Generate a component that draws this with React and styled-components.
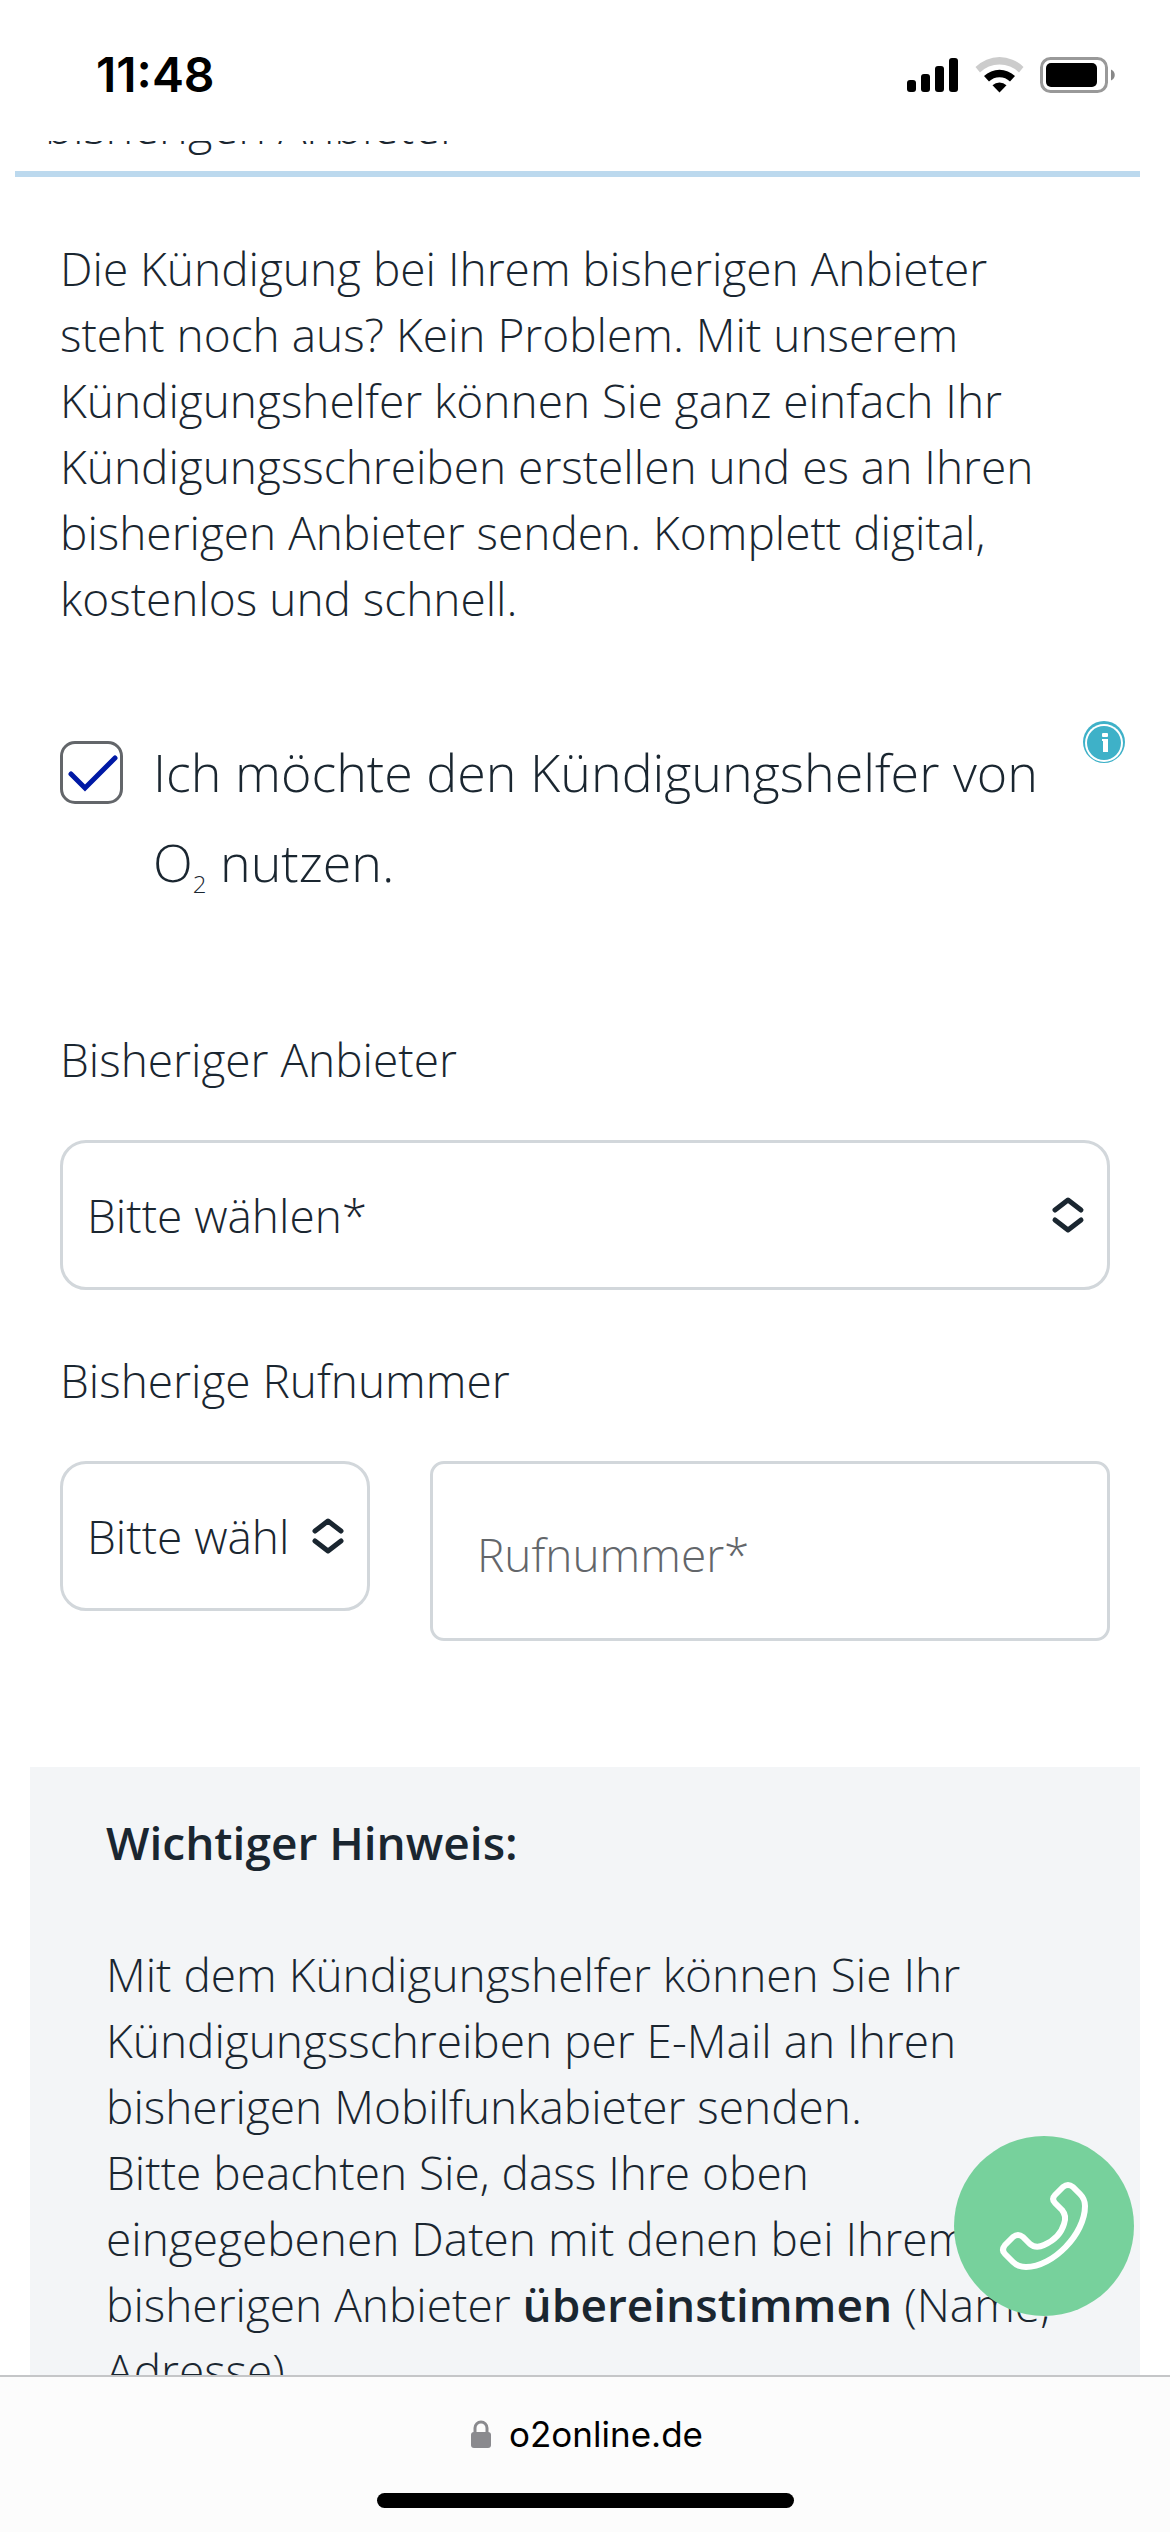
import React, { useState } from 'react';
import styled, { createGlobalStyle } from 'styled-components';

const GlobalStyle = createGlobalStyle`
  * {
    box-sizing: border-box;
  }
  body {
    margin: 0;
    background: #fff;
    color: #1a2630;
    font-family: 'Open Sans', 'Noto Sans', sans-serif;
    font-size: 46px;
    font-weight: 300;
    line-height: 66px;
  }
  b {
    font-weight: 600;
  }
`;

const Screen = styled.div`
  display: flex;
  flex-direction: column;
  height: 100vh;
  overflow: hidden;
`;

const StatusBar = styled.header`
  flex: none;
  display: flex;
  align-items: center;
  justify-content: space-between;
  height: 141px;
  padding: 8px 54px 0 96px;
  color: #000;
`;

const Clock = styled.time`
  font-family: Inter, sans-serif;
  font-size: 48px;
  font-weight: 600;
`;

const StatusIcons = styled.div`
  display: flex;
  align-items: center;
  gap: 16px;
`;

const Main = styled.main`
  flex: 1;
  min-height: 0;
  overflow: hidden;
`;

const StepHeader = styled.div`
  display: flex;
  align-items: flex-end;
  height: 36px;
  margin: 0 30px 0 15px;
  padding: 0 30px 12px;
  border-bottom: 6px solid #bcd9ee;
  overflow: hidden;
`;

const StepTitle = styled.h2`
  margin: 0;
  font-size: 47px;
  font-weight: inherit;
`;

const Form = styled.form`
  padding: 58px 60px 0;
`;

const Intro = styled.p`
  margin: 0;
`;

const HelperRow = styled.div`
  display: grid;
  grid-template-columns: 63px 1fr 42px;
  column-gap: 30px;
  margin: 90px -15px 0 0;
`;

const CheckWrap = styled.span`
  position: relative;
  height: 63px;
  margin-top: 20px;
`;

const Checkbox = styled.input`
  appearance: none;
  display: block;
  width: 63px;
  height: 63px;
  margin: 0;
  border: 3px solid #63666a;
  border-radius: 15px;
  background: #fff;
`;

const Overlay = styled.svg`
  position: absolute;
  top: 0;
  right: 0;
  pointer-events: none;
`;

const CheckLabel = styled.label`
  padding-top: 6px;
  font-size: 52px;
  line-height: 90px;

  sub {
    font-size: 24px;
    line-height: 0;
  }
`;

const InfoButton = styled.button`
  width: 42px;
  height: 42px;
  padding: 0;
  border: 0;
  background: none;

  svg {
    display: block;
  }
`;

const Label = styled.label`
  display: block;
`;

const Field = styled.div`
  margin-top: ${props => props.$gap}px;
`;

const PhoneRow = styled.div`
  display: grid;
  grid-template-columns: 310px 1fr;
  align-items: start;
  column-gap: 60px;
`;

const SelectWrap = styled.div`
  position: relative;
  margin-top: 48px;
`;

const Select = styled.select`
  appearance: none;
  display: block;
  width: 100%;
  height: 150px;
  padding: 0 78px 0 24px;
  border: 3px solid #d2d7db;
  border-radius: 26px;
  background: #fff;
  color: inherit;
  font: inherit;
`;

const PhoneInput = styled.input`
  width: 100%;
  height: 180px;
  margin-top: 48px;
  padding: 6px 44px 0;
  border: 3px solid #d2d7db;
  border-radius: 14px;
  background: #fff;
  color: inherit;
  font: inherit;

  &::placeholder {
    color: #63666a;
    opacity: 1;
  }
`;

const Notice = styled.section`
  margin: 126px 30px 0;
  padding: 42px 76px;
  background: #f3f5f7;
`;

const NoticeTitle = styled.h3`
  margin: 0 0 66px;
  font-size: 46px;
  font-weight: 600;
`;

const NoticeText = styled.p`
  margin: 0;
`;

const CallButton = styled.button`
  position: fixed;
  right: 36px;
  bottom: 216px;
  width: 180px;
  height: 180px;
  padding: 0;
  border: 0;
  border-radius: 50%;
  background: #77d19c;

  svg {
    display: block;
  }
`;

const AddressBar = styled.footer`
  flex: none;
  display: flex;
  flex-direction: column;
  align-items: center;
  justify-content: space-between;
  height: 157px;
  padding: 24px 0 24px;
  border-top: 2px solid #c5c6c8;
  background: #fcfcfc;
`;

const Address = styled.a`
  display: flex;
  align-items: center;
  gap: 18px;
  padding-left: 4px;
  color: #000;
  font-family: Inter, sans-serif;
  font-size: 35px;
  font-weight: 400;
  text-decoration: none;
`;

const HomeIndicator = styled.div`
  width: 417px;
  height: 15px;
  border-radius: 8px;
  background: #000;
`;

function SignalIcon() {
  return (
    <svg width="52" height="36" viewBox="0 0 52 36">
      <rect x="0" y="23" width="9" height="12" rx="3" />
      <rect x="14" y="17" width="9" height="18" rx="3" />
      <rect x="28" y="9" width="9" height="26" rx="3" />
      <rect x="42" y="1" width="9" height="34" rx="3" />
    </svg>
  );
}

function WifiIcon() {
  return (
    <svg width="49" height="36" viewBox="0 0 49 36">
      <path d="M0.500 10A34 34 0 0 1 48.500 10L44 15.500A27.500 27.500 0 0 0 5 15.500Z" fill="#ccc" />
      <path d="M9 19A22.500 22.500 0 0 1 40 19L35 24.500A15 15 0 0 0 14 24.500Z" />
      <path d="M17.500 28.200A10.500 10.500 0 0 1 31.500 28.200L24.500 35.500Z" />
    </svg>
  );
}

function BatteryIcon() {
  return (
    <svg width="76" height="36" viewBox="0 0 76 36">
      <rect x="1.500" y="1.500" width="65" height="33" rx="9" fill="none" stroke="#999" strokeWidth="3" />
      <rect x="6" y="6" width="51" height="24" rx="5" />
      <path d="M71 12.500C76 14.500 76 21.500 71 23.500Z" fill="#888" />
    </svg>
  );
}

function SelectArrows() {
  return (
    <Overlay width="84" height="150" viewBox="0 0 84 150" fill="none" stroke="#1a2630" strokeWidth="5" strokeLinecap="round" strokeLinejoin="round">
      <path d="M29 70L42 60L55 70M29 80L42 90L55 80" />
    </Overlay>
  );
}

function App() {
  const [useHelper, setUseHelper] = useState(true);
  const [phone, setPhone] = useState('');

  return (
    <Screen>
      <GlobalStyle />
      <StatusBar>
        <Clock>11:48</Clock>
        <StatusIcons>
          <SignalIcon />
          <WifiIcon />
          <BatteryIcon />
        </StatusIcons>
      </StatusBar>

      <Main>
        <StepHeader>
          <StepTitle>bisherigen Anbieter</StepTitle>
        </StepHeader>

        <Form>
          <Intro>
            Die Kündigung bei Ihrem bisherigen Anbieter<br />
            steht noch aus? Kein Problem. Mit unserem<br />
            Kündigungshelfer können Sie ganz einfach Ihr<br />
            Kündigungsschreiben erstellen und es an Ihren<br />
            bisherigen Anbieter senden. Komplett digital,<br />
            kostenlos und schnell.
          </Intro>

          <HelperRow>
            <CheckWrap>
              <Checkbox id="helper" type="checkbox" checked={useHelper} onChange={event => setUseHelper(event.target.checked)} />
              {useHelper && (
                <Overlay width="63" height="63" viewBox="0 0 63 63" fill="none" stroke="#0019a5" strokeWidth="5" strokeLinecap="round">
                  <path d="M11 33L25 47L55 17" />
                </Overlay>
              )}
            </CheckWrap>
            <CheckLabel htmlFor="helper">
              Ich möchte den Kündigungshelfer von<br />O<sub>2</sub> nutzen.
            </CheckLabel>
            <InfoButton type="button" aria-label="Info">
              <svg width="42" height="42" viewBox="0 0 42 42">
                <circle cx="21" cy="21" r="21" fill="#3eb1c8" />
                <circle cx="21" cy="22" r="19" fill="#fff" />
                <circle cx="21" cy="22" r="17" fill="#3eb1c8" />
                <rect x="19" y="12" width="6" height="4" rx="1" fill="#fff" />
                <path d="M19 18H25V31H20V20H19Z" fill="#fff" />
              </svg>
            </InfoButton>
          </HelperRow>

          <Field $gap={119}>
            <Label htmlFor="provider">Bisheriger Anbieter</Label>
            <SelectWrap>
              <Select id="provider">
                <option>Bitte wählen*</option>
              </Select>
              <SelectArrows />
            </SelectWrap>
          </Field>

          <Field $gap={57}>
            <Label htmlFor="phone">Bisherige Rufnummer</Label>
            <PhoneRow>
              <SelectWrap>
                <Select aria-label="Vorwahl">
                  <option>Bitte wählen*</option>
                </Select>
                <SelectArrows />
              </SelectWrap>
              <PhoneInput id="phone" type="tel" placeholder="Rufnummer*" value={phone} onChange={event => setPhone(event.target.value)} />
            </PhoneRow>
          </Field>
        </Form>

        <Notice>
          <NoticeTitle>Wichtiger Hinweis:</NoticeTitle>
          <NoticeText>
            Mit dem Kündigungshelfer können Sie Ihr<br />
            Kündigungsschreiben per E-Mail an Ihren<br />
            bisherigen Mobilfunkabieter senden.<br />
            Bitte beachten Sie, dass Ihre oben<br />
            eingegebenen Daten mit denen bei Ihrem<br />
            bisherigen Anbieter <b>übereinstimmen</b> (Name,<br />
            Adresse)
          </NoticeText>
        </Notice>
      </Main>

      <CallButton type="button" aria-label="Anrufen">
        <svg width="180" height="180" viewBox="0 0 180 180" fill="none" stroke="#fff" strokeWidth="6" strokeLinejoin="round">
          <path d="M109 51Q114 47 119 51L126 58Q131 63 131 70C131 98 99 131 72 131Q64 131 59 126L51 118Q47 114 51 109L59 101Q64 97 69 101L76 108Q82 113 90 109Q106 102 110 88Q113 80 108 74L101 67Q97 63 101 59Z" />
        </svg>
      </CallButton>

      <AddressBar>
        <Address href="#">
          <svg width="20" height="28" viewBox="0 0 20 28">
            <rect y="12" width="20" height="16" rx="3" fill="#8a8a8e" />
            <path d="M4 13V8A6 6 0 0 1 16 8V13" fill="none" stroke="#8a8a8e" strokeWidth="3" />
          </svg>
          o2online.de
        </Address>
        <HomeIndicator />
      </AddressBar>
    </Screen>
  );
}

export default App;
